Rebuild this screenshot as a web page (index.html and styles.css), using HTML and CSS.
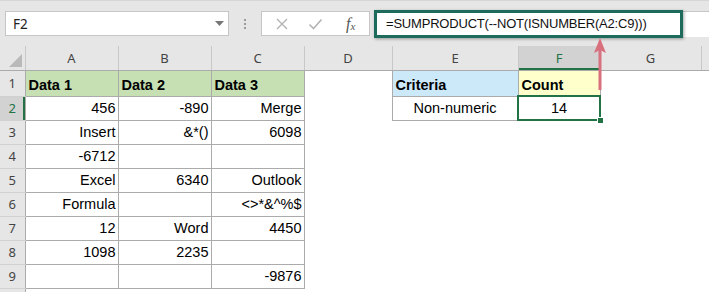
FILE: index.html
```html
<!DOCTYPE html>
<html lang="en">
<head>
    <meta charset="UTF-8">
    <title>SUMPRODUCT count non-numeric</title>
    <link rel="stylesheet" href="styles.css">
</head>
<body>
    <div class="toolbar">
        <div class="namebox">
            <span>F2</span>
            <svg class="caret" width="9" height="5" viewBox="0 0 9 5"><path d="M0 0h9L4.5 5z" fill="#777"/></svg>
        </div>
        <div class="grip"><i></i><i></i><i></i></div>
        <div class="fxbox">
            <svg width="14" height="14" viewBox="0 0 14 14"><path d="M2 2l10 10M12 2L2 12" stroke="#b4b4b4" stroke-width="1.4" fill="none"/></svg>
            <svg width="15" height="14" viewBox="0 0 15 14"><path d="M1.5 7.5l4 4 8-9" stroke="#b4b4b4" stroke-width="1.6" fill="none"/></svg>
            <span class="fx">f<sub>x</sub></span>
        </div>
        <div class="formula">
            <span class="formula-hl">=SUMPRODUCT(--NOT(ISNUMBER(A2:C9)))</span>
        </div>
    </div>

    <div class="sheet-wrap">
        <table class="sheet">
            <colgroup>
                <col class="c-rh"><col class="c-a"><col class="c-b"><col class="c-c"><col class="c-d">
                <col class="c-e"><col class="c-f"><col class="c-g"><col class="c-h">
            </colgroup>
            <tr class="head">
                <th class="corner"><span class="tri"></span></th>
                <th>A</th><th>B</th><th>C</th><th>D</th><th>E</th><th class="hsel">F</th><th>G</th><th></th>
            </tr>
            <tr class="r1">
                <th class="rh">1</th>
                <td class="b hd-green">Data 1</td><td class="b hd-green">Data 2</td><td class="b hd-green">Data 3</td>
                <td></td><td class="b hd-blue">Criteria</td><td class="b hd-yellow">Count</td><td></td><td></td>
            </tr>
            <tr>
                <th class="rh rsel">2</th>
                <td class="b num">456</td><td class="b num">-890</td><td class="b num">Merge</td>
                <td></td><td class="b mid">Non-numeric</td><td class="b mid sel">14<span class="handle"></span></td><td></td><td></td>
            </tr>
            <tr>
                <th class="rh">3</th>
                <td class="b num">Insert</td><td class="b num">&amp;*()</td><td class="b num">6098</td>
                <td></td><td></td><td></td><td></td><td></td>
            </tr>
            <tr>
                <th class="rh">4</th>
                <td class="b num">-6712</td><td class="b num"></td><td class="b num"></td>
                <td></td><td></td><td></td><td></td><td></td>
            </tr>
            <tr>
                <th class="rh">5</th>
                <td class="b num">Excel</td><td class="b num">6340</td><td class="b num">Outlook</td>
                <td></td><td></td><td></td><td></td><td></td>
            </tr>
            <tr>
                <th class="rh">6</th>
                <td class="b num">Formula</td><td class="b num"></td><td class="b num">&lt;&gt;*&amp;^%$</td>
                <td></td><td></td><td></td><td></td><td></td>
            </tr>
            <tr>
                <th class="rh">7</th>
                <td class="b num">12</td><td class="b num">Word</td><td class="b num">4450</td>
                <td></td><td></td><td></td><td></td><td></td>
            </tr>
            <tr>
                <th class="rh">8</th>
                <td class="b num">1098</td><td class="b num">2235</td><td class="b num"></td>
                <td></td><td></td><td></td><td></td><td></td>
            </tr>
            <tr>
                <th class="rh">9</th>
                <td class="b num"></td><td class="b num"></td><td class="b num">-9876</td>
                <td></td><td></td><td></td><td></td><td></td>
            </tr>
            <tr class="r10">
                <th class="rh"></th>
                <td></td><td></td><td></td><td></td><td></td><td></td><td></td><td></td>
            </tr>
        </table>
    </div>

    <!-- callout arrow pointing up at the formula -->
    <svg class="arrow" width="16" height="54" viewBox="0 0 16 54">
        <path d="M8 12V52" stroke="#d9707e" stroke-width="3"/>
        <path d="M8 0L14 15L8 12L2 15z" fill="#d9707e"/>
    </svg>
</body>
</html>
```

FILE: styles.css
```css
body {
    margin: 0;
    width: 709px;
    height: 292px;
    overflow: hidden;
    background: #fff;
    font-family: "Liberation Sans", Arial, sans-serif;
    position: relative;
}
.toolbar {
    height: 46px;
    background: #e6e6e6;
    border-top: 1px solid #d6d6d6;
    box-sizing: border-box;
    display: flex;
    align-items: flex-start;
    padding-top: 10px;
}
.namebox {
    margin-left: 5px;
    width: 224px;
    height: 25px;
    box-sizing: border-box;
    background: #fff;
    border: 1px solid #c6c6c6;
    display: flex;
    align-items: center;
    justify-content: space-between;
    padding: 0 4px 0 7px;
    font-family: "Noto Sans", sans-serif;
    font-size: 13.5px;
    color: #222;
}
.grip {
    width: 32px;
    height: 25px;
    display: flex;
    flex-direction: column;
    align-items: center;
    justify-content: center;
    gap: 2px;
}
.grip i {
    width: 2px;
    height: 2px;
    background: #9a9a9a;
}
.fxbox {
    width: 109px;
    height: 25px;
    box-sizing: border-box;
    background: #fff;
    border: 1px solid #c6c6c6;
    display: flex;
    align-items: center;
    padding-left: 13px;
    gap: 19px;
}
.fx {
    font-family: "Liberation Serif", serif;
    font-style: italic;
    font-size: 16px;
    color: #555;
    margin-left: 4px;
}
.fx sub {
    font-size: 11px;
    vertical-align: -1px;
}
.formula {
    flex: 1;
    margin-left: 4px;
    height: 25px;
    background: #fff;
    border-top: 1px solid #c6c6c6;
    border-left: 1px solid #c6c6c6;
    position: relative;
}
.formula-hl {
    position: absolute;
    left: -1px;
    top: -2px;
    width: 294px;
    height: 22px;
    border: 3px solid #1d6b5a;
    box-shadow: 1px 1px 3px rgba(0,0,0,0.35);
    background: #fff;
    font-size: 13px;
    letter-spacing: -0.2px;
    line-height: 22px;
    padding-left: 9px;
    color: #111;
}
.sheet-wrap {
    height: 246px;
    overflow: hidden;
}
.sheet {
    border-collapse: collapse;
    table-layout: fixed;
    width: 709px;
    font-size: 14.5px;
    color: #000;
}
.c-rh { width: 25px; }
.c-a, .c-b, .c-c { width: 93px; }
.c-d { width: 88px; }
.c-e { width: 126px; }
.c-f { width: 82px; }
.c-g { width: 101px; }
.c-h { width: 8px; }
td, th {
    padding: 0 3px;
    white-space: nowrap;
    overflow: hidden;
}
.head th {
    height: 20px;
    background: #e6e6e6;
    border-right: 1px solid #c8c8c8;
    border-bottom: 1px solid #ababab;
    font-family: "Noto Sans", sans-serif;
    font-weight: normal;
    font-size: 13px;
    color: #444;
    padding: 0;
}
.head th.hsel {
    background: #d2d2d2;
    color: #217346;
    box-shadow: inset 0 -2px 0 #217346;
}
.corner {
    position: relative;
}
.tri {
    position: absolute;
    right: 3px;
    bottom: 3px;
    width: 0;
    height: 0;
    border-left: 13px solid transparent;
    border-bottom: 13px solid #b9b9b9;
}
tr {
    height: 24px;
}
tr.r1 {
    height: 26px;
}
tr.r10 {
    height: 8px;
}
.rh {
    background: #e6e6e6;
    border-right: 1px solid #ababab;
    border-bottom: 1px solid #d0d0d0;
    font-family: "Noto Sans", sans-serif;
    font-weight: normal;
    font-size: 13px;
    color: #444;
    padding: 0;
    text-align: center;
}
.rh.rsel {
    background: #d2d2d2;
    color: #217346;
    box-shadow: inset -2px 0 0 #217346;
}
.b {
    border: 1px solid #ababab;
}
.num {
    text-align: right;
    padding-right: 2px;
}
.mid {
    text-align: center;
}
.hd-green, .hd-blue, .hd-yellow {
    font-weight: bold;
    text-align: left;
    padding-top: 3px;
}
.hd-green { background: #c6e0b4; }
.hd-blue { background: #cce9fa; }
.hd-yellow { background: #ffffcc; }
.sel {
    position: relative;
    overflow: visible;
}
.sel::after {
    content: "";
    position: absolute;
    left: -2px;
    top: -2px;
    right: -1px;
    bottom: -1px;
    border: 2px solid #217346;
}
.handle {
    position: absolute;
    right: -4px;
    bottom: -4px;
    width: 5px;
    height: 5px;
    background: #217346;
    border: 1px solid #fff;
    z-index: 2;
}
.arrow {
    position: absolute;
    left: 592px;
    top: 38px;
}
```
